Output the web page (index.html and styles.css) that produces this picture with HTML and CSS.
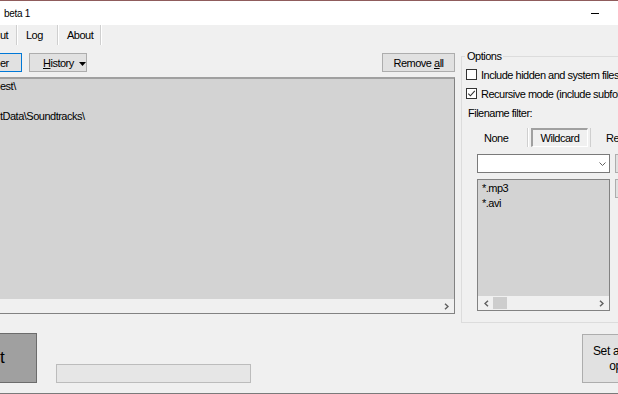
FILE: index.html
```html
<!DOCTYPE html>
<html lang="en">
<head>
<meta charset="utf-8">
<meta name="viewport" content="width=device-width">
<title>beta 1</title>
<link rel="stylesheet" href="styles.css">
</head>
<body>
<div class="window">
    <div class="titlebar">
        <span class="title">beta 1</span>
        <span class="minimize"></span>
    </div>

    <div class="tabs">
        <span class="tab tab-first">ut</span>
        <span class="tab tab-log">Log</span>
        <span class="tab tab-about">About</span>
    </div>

    <div class="page">
        <div class="sources">
            <div class="toolbar">
                <button class="btn btn-add">er</button>
                <button class="btn btn-history"><u>H</u>istory<svg class="drop" width="7" height="4" viewBox="0 0 7 4"><polygon points="0,0 7,0 3.5,4" fill="#000"/></svg></button>
                <button class="btn btn-remove">Remove <u>a</u>ll</button>
            </div>
            <div class="listbox list-folders">
                <ul class="items">
                    <li>est\</li>
                    <li></li>
                    <li>tData\Soundtracks\</li>
                </ul>
                <div class="hscroll">
                    <span class="arrow"><svg width="5" height="7" viewBox="0 0 5 7"><polyline points="1,0.8 4,3.5 1,6.2" fill="none" stroke="#606060" stroke-width="1.5"/></svg></span>
                </div>
            </div>
        </div>

        <fieldset class="options">
            <legend>Options</legend>
            <label class="check"><span class="box"></span>Include hidden and system files</label>
            <label class="check"><span class="box"><svg width="9" height="9" viewBox="0 0 9 9"><polyline points="1.3,4.6 3.4,6.8 7.8,1.8" fill="none" stroke="#333" stroke-width="1.1"/></svg></span>Recursive mode (include subfolders)</label>
            <div class="filter-label">Filename filter:</div>
            <div class="ftabs">
                <span class="ftab ftab-none">None</span>
                <span class="ftab ftab-wild">Wildcard</span>
                <span class="ftab ftab-regex">Regex</span>
            </div>
            <div class="filter">
                <div class="combo"><svg width="7" height="4" viewBox="0 0 7 4"><polyline points="0.5,0.5 3.5,3.5 6.5,0.5" fill="none" stroke="#606060" stroke-width="1"/></svg></div>
                <button class="btn side"></button>
                <div class="listbox list-filters">
                    <ul class="items">
                        <li>*.mp3</li>
                        <li>*.avi</li>
                    </ul>
                    <div class="hscroll">
                        <span class="arrow"><svg width="5" height="7" viewBox="0 0 5 7"><polyline points="4,0.8 1,3.5 4,6.2" fill="none" stroke="#606060" stroke-width="1.5"/></svg></span>
                        <span class="thumb"></span>
                        <span class="track"></span>
                        <span class="arrow"><svg width="5" height="7" viewBox="0 0 5 7"><polyline points="1,0.8 4,3.5 1,6.2" fill="none" stroke="#606060" stroke-width="1.5"/></svg></span>
                    </div>
                </div>
                <button class="btn side"></button>
            </div>
        </fieldset>
    </div>

    <div class="footer">
        <button class="btn-start">t</button>
        <div class="progress"></div>
        <button class="btn btn-set">Set as default<br>options</button>
    </div>
</div>
</body>
</html>
```

FILE: styles.css
```css
* {
    box-sizing: border-box;
}
body {
    margin: 0;
    width: 618px;
    height: 394px;
    overflow: hidden;
    background: #f0f0f0;
    font-family: "Liberation Sans", Arial, sans-serif;
    font-size: 11px;
    letter-spacing: -0.5px;
    color: #000;
}
.window {
    height: 394px;
    border-top: 1px solid #8f5c5c;
    border-bottom: 1px solid #7a7a7a;
    display: flex;
    flex-direction: column;
    overflow: hidden;
}

/* title bar */
.titlebar {
    flex-shrink: 0;
    height: 24px;
    background: #fff;
    display: flex;
    align-items: center;
}
.title {
    padding-left: 4px;
    font-size: 10px;
    letter-spacing: -0.3px;
}
.minimize {
    margin-left: auto;
    margin-right: 19px;
    width: 8px;
    height: 1px;
    background: #000;
}

/* main tabs */
.tabs {
    flex-shrink: 0;
    height: 20px;
    display: flex;
}
.tab {
    display: flex;
    align-items: center;
    border-right: 1px solid #cfcfcf;
    box-shadow: 1px 0 0 #fff;
}
.tab-first { width: 17px; }
.tab-log { width: 41px; padding-left: 9px; }
.tab-about { width: 43px; padding-left: 9px; }

.page {
    flex-shrink: 0;
    height: 278px;
    display: flex;
}

/* buttons */
.btn {
    font: inherit;
    letter-spacing: inherit;
    color: #000;
    background: #e1e1e1;
    border: 1px solid #adadad;
    margin: 0;
    padding: 0;
    height: 19px;
    text-align: left;
    white-space: nowrap;
    flex-shrink: 0;
}
.btn u {
    text-underline-offset: 1px;
}

/* left column */
.sources {
    flex-shrink: 0;
    width: 455px;
    padding-top: 8px;
    display: flex;
    flex-direction: column;
}
.toolbar {
    display: flex;
    height: 19px;
}
.btn-add {
    width: 22px;
    border-color: #0078d7;
    border-left: 0;
}
.btn-history {
    width: 58px;
    margin-left: 7px;
    padding-left: 13px;
}
.drop {
    margin-left: 5px;
    vertical-align: 1px;
}
.btn-remove {
    width: 73px;
    margin-left: auto;
    text-align: center;
}

.listbox {
    background: #d3d3d3;
    border: 1px solid #828282;
    display: flex;
    flex-direction: column;
}
.list-folders {
    margin-top: 5px;
    height: 237px;
    border-left: 0;
    border-top: 2px solid #a0a0a0;
}
.items {
    list-style: none;
    margin: 0;
    padding: 0;
    flex: 1;
}
.items li {
    height: 15px;
    line-height: 15px;
    white-space: nowrap;
}
.hscroll {
    height: 14px;
    background: #f0f0f0;
    display: flex;
    align-items: stretch;
    justify-content: flex-end;
}
.arrow {
    width: 14px;
    display: flex;
    align-items: center;
    justify-content: center;
}
.list-folders .arrow {
    margin-right: 1px;
}

/* options group */
.options {
    flex-shrink: 0;
    width: 260px;
    min-width: 0;
    margin: 5px 0 0 6px;
    padding: 2px 0 11px 0;
    border: 1px solid #dcdcdc;
}
.options legend {
    margin-left: 3px;
    padding: 0 2px;
    line-height: 13px;
}
.check {
    height: 19px;
    padding-left: 4px;
    display: flex;
    align-items: center;
    white-space: nowrap;
}
.box {
    flex-shrink: 0;
    width: 11px;
    height: 11px;
    margin-right: 4px;
    border: 1px solid #333;
    background: #fff;
    display: flex;
}
.filter-label {
    height: 20px;
    line-height: 20px;
    padding-left: 6px;
}
.ftabs {
    margin-top: 5px;
    height: 19px;
    display: flex;
    white-space: nowrap;
}
.ftab {
    display: flex;
    align-items: center;
}
.ftab-none {
    width: 66px;
    padding-left: 22px;
    border-right: 1px solid #cfcfcf;
    box-shadow: 1px 0 0 #fff;
}
.ftab-wild {
    width: 57px;
    margin-left: 3px;
    justify-content: center;
    border-top: 2px solid #a0a0a0;
    border-left: 2px solid #a0a0a0;
    border-right: 1px solid #fff;
    border-bottom: 1px solid #fff;
}
.ftab-regex {
    margin-left: 2px;
    padding-left: 15px;
    border-left: 1px solid #cfcfcf;
}

.filter {
    margin: 7px 0 0 15px;
    display: grid;
    grid-template-columns: 133px 40px;
    column-gap: 5px;
    row-gap: 6px;
    align-items: start;
}
.combo {
    height: 19px;
    background: #fff;
    border: 1px solid #7a7a7a;
    display: flex;
    align-items: center;
    justify-content: flex-end;
    padding-right: 3px;
}
.list-filters {
    height: 132px;
}
.list-filters .items {
    padding: 1px 0 0 4px;
}
.list-filters .hscroll {
    padding: 0 1px;
}
.thumb {
    width: 14px;
    margin: 1px 0;
    background: #cdcdcd;
}
.track {
    flex: 1;
}

/* bottom bar */
.footer {
    flex: 1;
    display: flex;
    align-items: flex-start;
}
.btn-start {
    flex-shrink: 0;
    margin: 10px 0 0 0;
    width: 37px;
    height: 50px;
    padding: 0;
    background: #a0a0a0;
    border: 1px solid #6c6c6c;
    border-left: 0;
    font-family: inherit;
    font-size: 17px;
    color: #000;
    text-align: left;
}
.progress {
    flex-shrink: 0;
    margin: 41px 0 0 19px;
    width: 195px;
    height: 19px;
    background: #e6e6e6;
    border: 1px solid #bcbcbc;
}
.btn-set {
    margin: 11px 0 0 331px;
    width: 91px;
    height: 49px;
    font-size: 12px;
    letter-spacing: -0.3px;
    line-height: 15px;
    text-align: center;
}
```
